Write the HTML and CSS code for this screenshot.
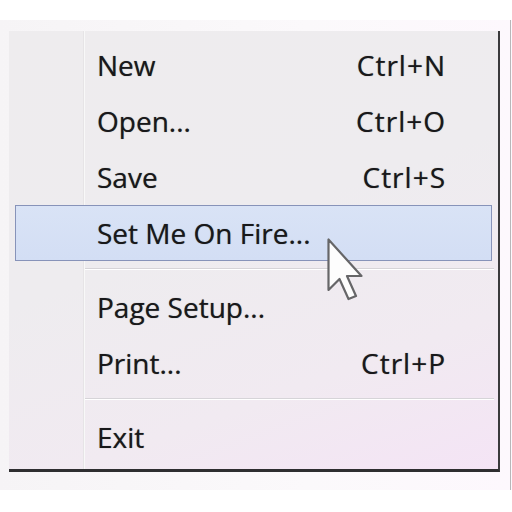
FILE: index.html
```html
<!DOCTYPE html>
<html>
<head>
<meta charset="utf-8">
<link rel="stylesheet" href="styles.css">
</head>
<body>
<div class="stage">
  <div class="menu">
    <div class="item"><span>New</span><span class="key">Ctrl+N</span></div>
    <div class="item"><span>Open...</span><span class="key">Ctrl+O</span></div>
    <div class="item"><span>Save</span><span class="key">Ctrl+S</span></div>
    <div class="item hot"><span>Set Me On Fire...</span></div>
    <div class="sep"></div>
    <div class="item"><span>Page Setup...</span></div>
    <div class="item"><span>Print...</span><span class="key">Ctrl+P</span></div>
    <div class="sep"></div>
    <div class="item"><span>Exit</span></div>
    <svg class="cursor" width="40" height="66" viewBox="0 0 40 66">
      <path d="M1.5 1.5 L1.5 52 L12.5 41 L21.5 61 L29 58 L20 38 L34.5 38 Z" fill="#fdfdfd" stroke="#666668" stroke-width="2.2" stroke-linejoin="round"/>
    </svg>
  </div>
  <div class="edge"></div>
</div>
</body>
</html>
```

FILE: styles.css
```css
html, body {
  margin: 0;
  padding: 0;
  background: #ffffff;
}
body {
  width: 512px;
  height: 512px;
  overflow: hidden;
  font-family: "Open Sans", "Noto Sans", sans-serif;
}
.stage {
  margin-top: 20px;
  height: 470px;
  padding-top: 11px;
  box-sizing: border-box;
  background: linear-gradient(90deg, #f6f4f6 0%, #fbf9fb 60%, #fdf8fd 100%);
  position: relative;
}
.edge {
  position: absolute;
  right: 1px;
  top: 0;
  width: 1px;
  height: 470px;
  background: #b8b6b8;
}
.menu {
  position: relative;
  margin-left: 9px;
  width: 489px;
  box-sizing: content-box;
  padding: 6px 0 4px 0;
  border-right: 2px solid #3a3a3c;
  border-bottom: 3px solid #2e2e30;
  background:
    linear-gradient(90deg, transparent 74px, #e6e4e6 74px, #e6e4e6 75px, #f8f8f8 75px, #f8f8f8 76px, transparent 76px),
    linear-gradient(160deg, #eeecee 0%, #eeecef 45%, #f1eaf1 75%, #f4e4f5 100%);
}
.item {
  display: flex;
  justify-content: space-between;
  height: 56px;
  line-height: 56px;
  font-size: 28px;
  font-weight: 500;
  color: #18181a;
  text-shadow: 0 0 0.8px rgba(20, 20, 22, 0.6);
  padding: 0 52px 0 88px;
}
.key {
  letter-spacing: 1px;
}
.item.hot {
  margin: 0 6px;
  padding-left: 81px;
  border: 1px solid #8793b9;
  height: 54px;
  line-height: 54px;
  background: linear-gradient(180deg, #d9e3f6 0%, #d3def4 100%);
}
.sep {
  height: 18px;
  position: relative;
}
.sep::after {
  content: "";
  position: absolute;
  left: 76px;
  right: 4px;
  top: 7px;
  height: 1px;
  background: #d6d4d8;
  border-bottom: 1px solid #ffffff;
}
.cursor {
  position: absolute;
  left: 318px;
  top: 207px;
}
```
